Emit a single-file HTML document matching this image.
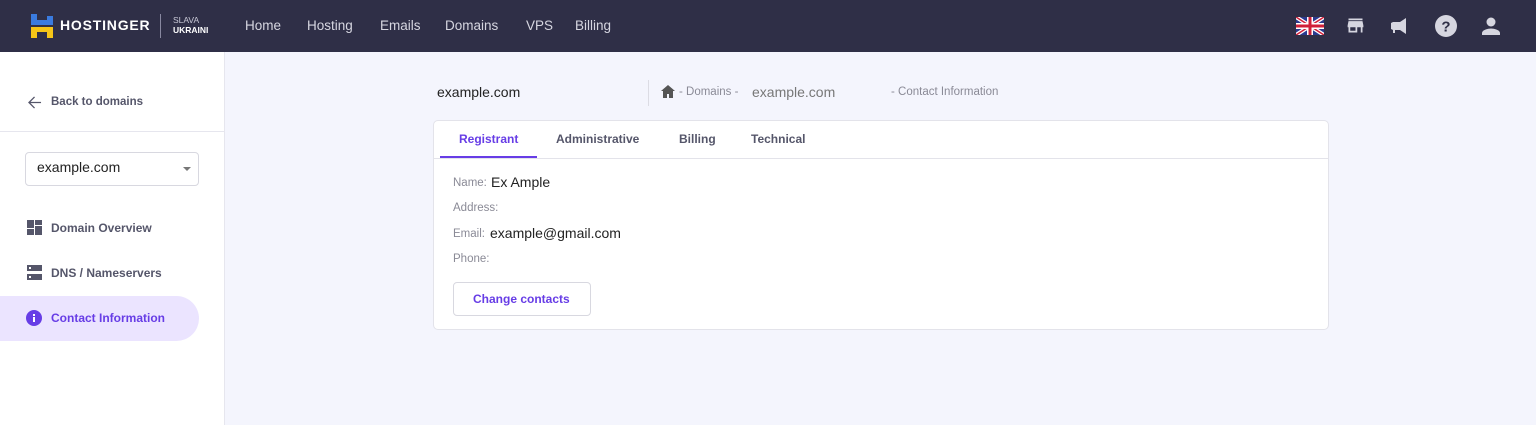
<!DOCTYPE html>
<html><head><meta charset="utf-8"><style>
*{margin:0;padding:0;box-sizing:border-box}
body{width:1536px;height:425px;overflow:hidden;background:#f4f5fd;font-family:"Liberation Sans",sans-serif;position:relative}
.hdr{position:absolute;left:0;top:0;width:1536px;height:52px;background:#2f2f47}
.abs{position:absolute;white-space:nowrap}
.nav{color:#d6d6e0;font-size:13.5px;top:18px}
.side{position:absolute;left:0;top:52px;width:225px;height:373px;background:#fff;border-right:1px solid #e6e6ee}
.mi{color:#55566a;font-size:12px;font-weight:bold}
.card{position:absolute;left:433px;top:120px;width:896px;height:210px;background:#fff;border:1px solid #e3e3ea;border-radius:5px}
.lbl{color:#8a8a96;font-size:11.5px}
.val{color:#222;font-size:14px}
</style></head><body>
<div class="hdr"></div>
<svg class="abs" style="left:31px;top:14px" width="22" height="24" viewBox="0 0 22 24"><path d="M0 0h6v6h10V2h6v9H0z" fill="#3a7be0"/><path d="M0 13h22v11h-6v-6H6v6H0z" fill="#f5c518"/></svg>
<div class="abs" style="left:60px;top:17px;color:#fff;font-weight:bold;font-size:14px;letter-spacing:.8px">HOSTINGER</div>
<div class="abs" style="left:160px;top:14px;width:1px;height:24px;background:#8888a0"></div>
<div class="abs" style="left:173px;top:15px;color:#c8c8d6;font-size:8.5px;line-height:10px">SLAVA<br><b style="color:#fff">UKRAINI</b></div>
<div class="abs nav" style="left:245px">Home</div>
<div class="abs nav" style="left:307px">Hosting</div>
<div class="abs nav" style="left:380px">Emails</div>
<div class="abs nav" style="left:445px">Domains</div>
<div class="abs nav" style="left:526px">VPS</div>
<div class="abs nav" style="left:575px">Billing</div>
<svg class="abs" style="left:1296px;top:17px" width="28" height="18" viewBox="0 0 28 18"><rect width="28" height="18" fill="#2a3a8f"/><path d="M0 0L28 18M28 0L0 18" stroke="#fff" stroke-width="4"/><path d="M0 0L28 18M28 0L0 18" stroke="#d0203a" stroke-width="1.5"/><path d="M14 0v18M0 9h28" stroke="#fff" stroke-width="6"/><path d="M14 0v18M0 9h28" stroke="#d0203a" stroke-width="3"/></svg>
<svg class="abs" style="left:1345px;top:15px" width="21" height="21" viewBox="0 0 24 24" fill="#d6d6e0"><path d="M20 4H4v2h16zm1 10v-2l-1-5H4l-1 5v2h1v6h10v-6h4v6h2v-6zm-9 4H6v-4h6z"/></svg>
<svg class="abs" style="left:1388px;top:14px" width="24" height="24" viewBox="0 0 24 24" fill="#d6d6e0"><path d="M18 4v16l-6-4H7v3H5v-3l-2-1V9l2-1h7l6-4z"/></svg>
<svg class="abs" style="left:1434px;top:14px" width="24" height="24" viewBox="0 0 24 24"><circle cx="12" cy="12" r="11" fill="#d6d6e0"/><text x="12" y="17.5" text-anchor="middle" font-size="15" font-weight="bold" fill="#2f2f47" font-family="Liberation Sans">?</text></svg>
<svg class="abs" style="left:1479px;top:14px" width="24" height="24" viewBox="0 0 24 24" fill="#d6d6e0"><circle cx="12" cy="8" r="4.5"/><path d="M3 21v-2c0-3 6-4.5 9-4.5s9 1.5 9 4.5v2z"/></svg>

<div class="side"></div>
<svg class="abs" style="left:28px;top:96px" width="14" height="13" viewBox="0 0 15 14"><path d="M14 7H2M7 1L1 7l6 6" stroke="#55566a" stroke-width="1.4" fill="none"/></svg>
<div class="abs mi" style="left:51px;top:96px;font-size:11.5px">Back to domains</div>
<div class="abs" style="left:0;top:131px;width:225px;height:1px;background:#e6e6ee"></div>
<div class="abs" style="left:25px;top:152px;width:174px;height:34px;border:1px solid #d8d8e0;border-radius:4px;background:#fff"></div>
<div class="abs" style="left:37px;top:159px;color:#222;font-size:14px">example.com</div>
<div class="abs" style="left:183px;top:167px;border-left:4px solid transparent;border-right:4px solid transparent;border-top:4px solid #777"></div>
<svg class="abs" style="left:27px;top:220px" width="15" height="15" viewBox="0 0 15 15" fill="#55566a"><rect width="7" height="8"/><rect x="8" width="7" height="5"/><rect y="9" width="7" height="6"/><rect x="8" y="6" width="7" height="9"/></svg>
<div class="abs mi" style="left:51px;top:221px">Domain Overview</div>
<svg class="abs" style="left:27px;top:265px" width="15" height="15" viewBox="0 0 15 15" fill="#55566a"><rect width="15" height="6"/><rect y="9" width="15" height="6"/><rect x="2" y="11" width="2" height="2" fill="#fff"/><rect x="2" y="2" width="2" height="2" fill="#fff"/></svg>
<div class="abs mi" style="left:51px;top:266px">DNS / Nameservers</div>
<div class="abs" style="left:0;top:296px;width:199px;height:45px;background:#ebe4ff;border-radius:0 23px 23px 0"></div>
<svg class="abs" style="left:26px;top:310px" width="16" height="16" viewBox="0 0 16 16"><circle cx="8" cy="8" r="8" fill="#673de6"/><rect x="7" y="7" width="2" height="5" fill="#fff"/><rect x="7" y="4" width="2" height="2" fill="#fff"/></svg>
<div class="abs mi" style="left:51px;top:311px;color:#673de6">Contact Information</div>

<div class="abs" style="left:437px;top:84px;color:#222;font-size:14px">example.com</div>
<div class="abs" style="left:648px;top:80px;width:1px;height:26px;background:#dcdce4"></div>
<svg class="abs" style="left:661px;top:85px" width="14" height="13" viewBox="0 0 14 13" fill="#555"><path d="M7 0L0 6h2v7h4V9h2v4h4V6h2z"/></svg>
<div class="abs" style="left:679px;top:86px;color:#8a8a96;font-size:11.5px">- Domains -</div>
<div class="abs" style="left:752px;top:84px;color:#777;font-size:14px">example.com</div>
<div class="abs" style="left:891px;top:86px;color:#8a8a96;font-size:11.5px">- Contact Information</div>

<div class="card"></div>
<div class="abs" style="left:434px;top:158px;width:894px;height:1px;background:#e3e3ea"></div>
<div class="abs" style="left:440px;top:156px;width:97px;height:2px;background:#673de6"></div>
<div class="abs mi" style="left:459px;top:132px;color:#673de6">Registrant</div>
<div class="abs mi" style="left:556px;top:132px">Administrative</div>
<div class="abs mi" style="left:679px;top:132px">Billing</div>
<div class="abs mi" style="left:751px;top:132px">Technical</div>
<div class="abs lbl" style="left:453px;top:177px">Name:</div><div class="abs val" style="left:491px;top:174px">Ex Ample</div>
<div class="abs lbl" style="left:453px;top:202px">Address:</div>
<div class="abs lbl" style="left:453px;top:228px">Email:</div><div class="abs val" style="left:490px;top:225px">example@gmail.com</div>
<div class="abs lbl" style="left:453px;top:253px">Phone:</div>
<div class="abs" style="left:453px;top:282px;width:138px;height:34px;border:1px solid #d8d8e0;border-radius:4px;background:#fff"></div>
<div class="abs mi" style="left:473px;top:292px;color:#673de6">Change contacts</div>
</body></html>
